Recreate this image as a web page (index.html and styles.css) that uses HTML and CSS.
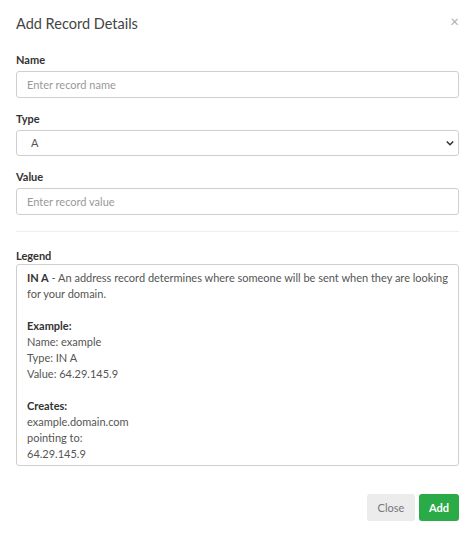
FILE: index.html
```html
<!DOCTYPE html>
<html>
<head>
<meta charset="utf-8">
<link rel="stylesheet" href="styles.css">
</head>
<body>
<div class="modal">
  <div class="header">
    <h4 class="title">Add Record Details</h4>
    <span class="close-x">&times;</span>
  </div>
  <div class="group">
    <label class="label">Name</label>
    <input class="field" type="text" placeholder="Enter record name">
  </div>
  <div class="group">
    <label class="label">Type</label>
    <div class="select-wrap">
      <select class="field select"><option>A</option></select>
      <svg class="chev" width="10" height="8" viewBox="0 0 10 8"><path d="M1.8 2.5 L5 5.7 L8.2 2.5" fill="none" stroke="#333" stroke-width="1.6"/></svg>
    </div>
  </div>
  <div class="group last">
    <label class="label">Value</label>
    <input class="field" type="text" placeholder="Enter record value">
  </div>
  <hr class="sep">
  <label class="label legend-label">Legend</label>
  <div class="legend">
    <div><b>IN A</b> - An address record determines where someone will be sent when they are looking for your domain.</div>
    <div class="blank"></div>
    <div><b>Example:</b></div>
    <div>Name: example</div>
    <div>Type: IN A</div>
    <div>Value: 64.29.145.9</div>
    <div class="blank"></div>
    <div><b>Creates:</b></div>
    <div>example.domain.com</div>
    <div>pointing to:</div>
    <div>64.29.145.9</div>
  </div>
  <div class="footer">
    <button class="btn btn-close">Close</button>
    <button class="btn btn-add">Add</button>
  </div>
</div>
</body>
</html>
```
FILE: styles.css
```css
html, body {
  margin: 0;
  padding: 0;
  background: #fff;
}
body {
  font-family: Lato, "Open Sans", sans-serif;
  color: #333;
  font-size: 11px;
}
.modal {
  padding: 14px 15px 0 16px;
  display: flex;
  flex-direction: column;
}
.header {
  display: flex;
  justify-content: space-between;
  align-items: flex-start;
  margin-bottom: 18px;
}
.title {
  margin: 0;
  font-size: 14.5px;
  line-height: 20px;
  font-weight: 400;
  color: #444;
}
.close-x {
  font-size: 15px;
  line-height: 15px;
  color: #b0b0b0;
  margin-top: 0;
  margin-right: 0;
}
.group {
  display: flex;
  flex-direction: column;
  margin-bottom: 13px;
}
.group.last {
  margin-bottom: 16.5px;
}
.label {
  font-weight: 700;
  font-size: 11px;
  line-height: 16px;
  margin-bottom: 3px;
  color: #333;
}
.field {
  box-sizing: border-box;
  height: 26.5px;
  width: 100%;
  border: 1px solid #cfcfcf;
  border-radius: 3px;
  padding: 0 10px;
  font-family: Lato, "Open Sans", sans-serif;
  font-size: 11px;
  color: #555;
  background: #fff;
  margin: 0;
  outline: none;
}
.field::placeholder {
  color: #999;
}
.select-wrap {
  position: relative;
}
.select {
  appearance: none;
  -webkit-appearance: none;
  padding-left: 14px;
  display: block;
}
.chev {
  position: absolute;
  right: 4px;
  top: 9px;
}
.sep {
  border: 0;
  border-top: 1px solid #eee;
  margin: 0 0 15.5px 0;
  height: 0;
}
.legend-label {
  margin-bottom: 0;
}
.legend {
  border: 1px solid #cfcfcf;
  border-radius: 3px;
  padding: 5px 10px 3px 10px;
  line-height: 16px;
  font-size: 11px;
  color: #555;
}
.legend b {
  color: #333;
}
.blank {
  height: 16px;
}
.footer {
  display: flex;
  justify-content: flex-end;
  gap: 4px;
  margin-top: 28px;
}
.btn {
  height: 27px;
  border: 0;
  border-radius: 3px;
  font-family: Lato, "Open Sans", sans-serif;
  font-size: 11px;
  padding: 0;
}
.btn-close {
  background: #ececec;
  color: #777;
  width: 48px;
}
.btn-add {
  background: #2aab48;
  color: #fff;
  font-weight: 700;
  width: 40px;
}
```
